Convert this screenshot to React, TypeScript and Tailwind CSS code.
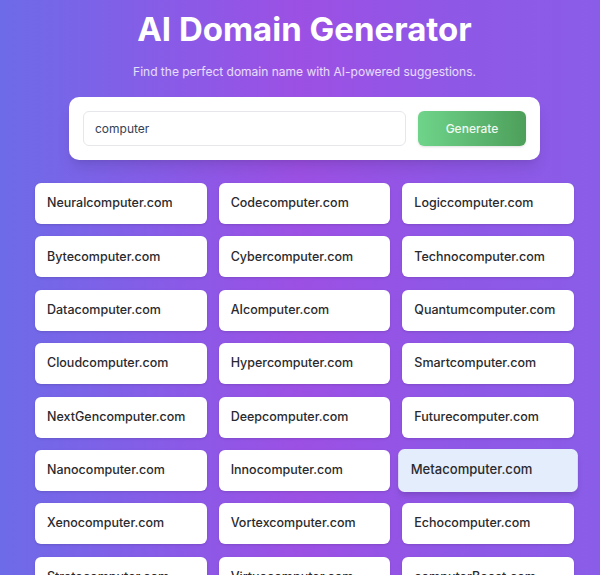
import React, { useState } from "react";

const prefixes = [
  "Neural", "Code", "Logic",
  "Byte", "Cyber", "Techno",
  "Data", "AI", "Quantum",
  "Cloud", "Hyper", "Smart",
  "NextGen", "Deep", "Future",
  "Nano", "Inno", "Meta",
  "Xeno", "Vortex", "Echo",
  "Strato", "Virtuo",
];

export default function App() {
  const [keyword, setKeyword] = useState("computer");
  const domains = [
    ...prefixes.map((p) => `${p}${keyword}.com`),
    `${keyword}Boost.com`,
  ];

  return (
    <div
      className="h-[575px] overflow-hidden bg-[linear-gradient(90deg,#6d6be8_0%,#8a5ae7_30%,#9c50e4_50%,#8f57e6_75%,#8a5de8_100%)]"
      style={{ fontFamily: "Inter, 'Noto Sans', sans-serif" }}
    >
      <div className="flex flex-col items-center pt-[9px] pl-[9px]">
        {/* Header */}
        <h1 className="text-[33px] leading-[40px] font-bold text-white">
          AI Domain Generator
        </h1>
        <p className="mt-[14px] text-[12px] text-white/80">
          Find the perfect domain name with AI-powered suggestions.
        </p>

        {/* Search card */}
        <div className="mt-[16px] w-[471px] bg-white rounded-[10px] shadow-lg p-[14px] flex gap-[12px]">
          <input
            value={keyword}
            onChange={(e) => setKeyword(e.target.value)}
            className="flex-1 h-[35px] px-[11px] text-[12px] text-gray-700 border border-gray-200 rounded-[6px] outline-none"
          />
          <button className="w-[108px] h-[35px] rounded-[6px] text-[12px] font-medium text-white/90 bg-[linear-gradient(90deg,#6fd48a,#4d9f5a)] shadow-sm">
            Generate
          </button>
        </div>

        {/* Results */}
        <div className="mt-[23px] w-[539px] grid grid-cols-3 gap-x-[12px] gap-y-[12.4px]">
          {domains.map((d, i) => (
            <div
              key={i}
              className={
                i === 17
                  ? "h-[41px] flex items-center px-[12px] rounded-[6px] bg-[#e4edfb] shadow-md scale-[1.045] text-[12.5px] font-medium text-[#2a2a2e]"
                  : "h-[41px] flex items-center px-[12px] rounded-[6px] bg-white shadow-sm text-[12.5px] font-medium text-[#2a2a2e]"
              }
            >
              {d}
            </div>
          ))}
        </div>
      </div>
    </div>
  );
}
